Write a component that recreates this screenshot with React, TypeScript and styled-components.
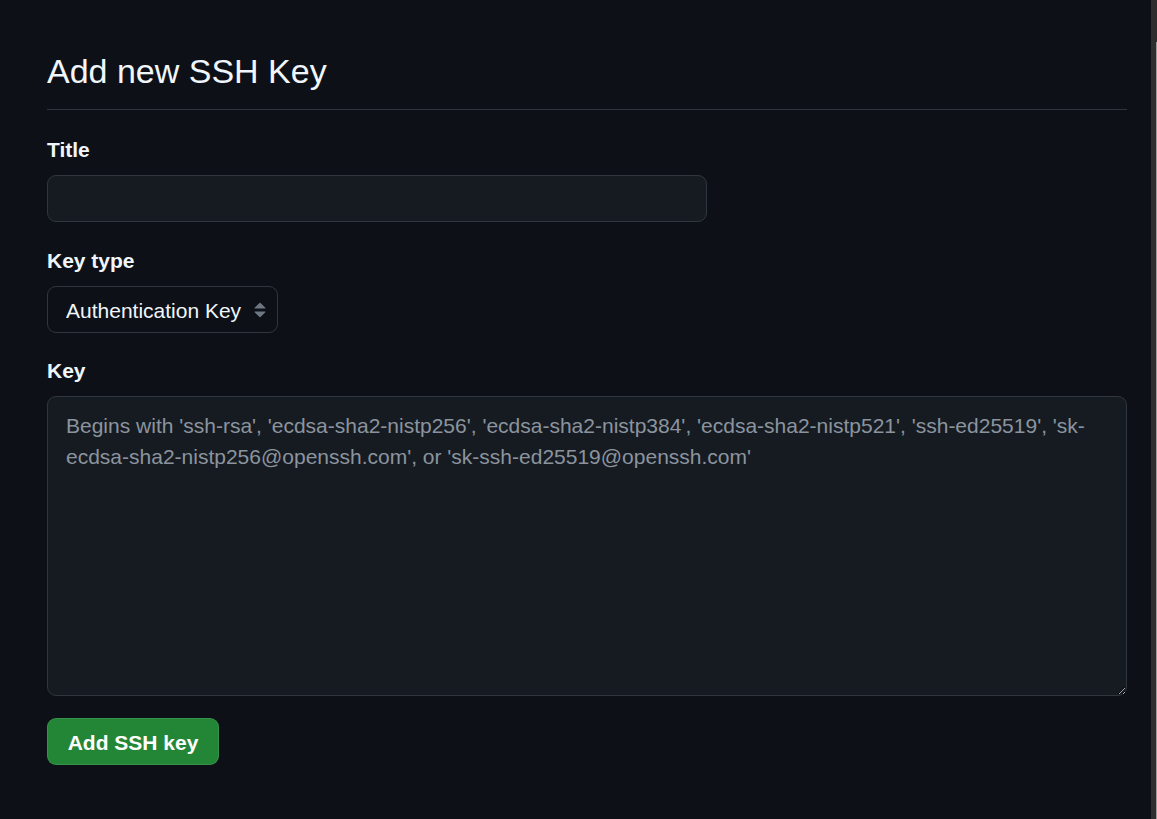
import React from "react";
import styled, { createGlobalStyle } from "styled-components";

const GlobalStyle = createGlobalStyle`
    html, body {
        margin: 0;
        padding: 0;
        background: #0d1117;
        color-scheme: dark;
    }
    body {
        font-family: "Liberation Sans", Arial, sans-serif;
        color: #e6edf3;
        overflow: hidden;
    }
`

const App: React.FC = () => {
    return (
        <Page>
            <GlobalStyle />
            <Main>
                <Subhead>
                    <Heading>Add new SSH Key</Heading>
                </Subhead>
                <form onSubmit={(e) => e.preventDefault()}>
                    <FormGroup>
                        <Label htmlFor="ssh_key_title">Title</Label>
                        <TextInput id="ssh_key_title" type="text" />
                    </FormGroup>
                    <FormGroup>
                        <Label htmlFor="ssh_key_type">Key type</Label>
                        <SelectWrap>
                            <Select id="ssh_key_type" defaultValue="authentication">
                                <option value="authentication">Authentication Key</option>
                                <option value="signing">Signing Key</option>
                            </Select>
                            <SelectArrow width="24" height="24" viewBox="0 0 16 16" aria-hidden="true">
                                <path d="M4.427 9.427l3.396 3.396a.25.25 0 00.354 0l3.396-3.396A.25.25 0 0011.396 9H4.604a.25.25 0 00-.177.427zM4.427 6.573l3.396-3.396a.25.25 0 01.354 0l3.396 3.396A.25.25 0 0111.396 7H4.604a.25.25 0 01-.177-.427z" />
                            </SelectArrow>
                        </SelectWrap>
                    </FormGroup>
                    <FormGroup>
                        <Label htmlFor="ssh_key_key">Key</Label>
                        <KeyArea
                            id="ssh_key_key"
                            placeholder="Begins with 'ssh-rsa', 'ecdsa-sha2-nistp256', 'ecdsa-sha2-nistp384', 'ecdsa-sha2-nistp521', 'ssh-ed25519', 'sk-ecdsa-sha2-nistp256@openssh.com', or 'sk-ssh-ed25519@openssh.com'"
                        />
                    </FormGroup>
                    <SubmitButton type="submit">Add SSH key</SubmitButton>
                </form>
            </Main>
            <ScrollTrack>
                <ScrollThumb />
            </ScrollTrack>
        </Page>
    );
}

export default App;

const Page = styled.div`
    display: flex;
    height: 819px;
    background: #0d1117;
`

const Main = styled.div`
    flex: 1;
    padding: 44px 24px 0 47px;
`

const ScrollTrack = styled.div`
    width: 6px;
    background: #2e2e2e;
    display: flex;
    flex-direction: column;
    align-items: flex-end;
`

const ScrollThumb = styled.div`
    width: 1px;
    margin-top: 42px;
    flex: 1;
    background: #9a9a9a;
`

const Subhead = styled.div`
    padding-bottom: 11px;
    border-bottom: 1px solid #30363d;
    margin-bottom: 25px;
`

const Heading = styled.h2`
    margin: 0;
    font-size: 34px;
    font-weight: 400;
    line-height: 54px;
    color: #f0f6fc;
`

const FormGroup = styled.div`
    margin-bottom: 23.5px;
`

const Label = styled.label`
    display: block;
    font-size: 21px;
    font-weight: 700;
    line-height: 30px;
    margin-bottom: 10px;
    color: #f0f6fc;
`

const TextInput = styled.input`
    display: block;
    box-sizing: border-box;
    width: 660px;
    height: 47px;
    padding: 7px 18px;
    font-family: inherit;
    font-size: 21px;
    color: #e6edf3;
    background: #161b22;
    border: 1px solid #30363d;
    border-radius: 9px;
    outline: none;
`

const SelectWrap = styled.div`
    position: relative;
    display: inline-block;
`

const Select = styled.select`
    display: block;
    box-sizing: border-box;
    width: 231px;
    height: 47px;
    padding: 2px 30px 0 18px;
    font-family: inherit;
    font-size: 21px;
    color: #f0f6fc;
    background: #0d1117;
    border: 1px solid #30363d;
    border-radius: 9px;
    appearance: none;
    outline: none;
`

const SelectArrow = styled.svg`
    position: absolute;
    right: 6px;
    top: 12px;
    fill: #6e7681;
    pointer-events: none;
`

const KeyArea = styled.textarea`
    display: block;
    box-sizing: border-box;
    width: 100%;
    height: 300px;
    padding: 13px 18px 12px;
    font-family: inherit;
    font-size: 21px;
    line-height: 31px;
    color: #e6edf3;
    background: #161b22;
    border: 1px solid #30363d;
    border-radius: 9px;
    resize: vertical;
    outline: none;

    &::placeholder {
        color: #8b949e;
    }
`

const SubmitButton = styled.button`
    box-sizing: border-box;
    height: 47px;
    width: 172px;
    margin-top: -1.5px;
    padding: 3px 18px 0;
    font-family: inherit;
    font-size: 21px;
    font-weight: 700;
    color: #ffffff;
    background: #238636;
    border: 1px solid rgba(240, 246, 252, 0.1);
    border-radius: 9px;
    cursor: pointer;
`
